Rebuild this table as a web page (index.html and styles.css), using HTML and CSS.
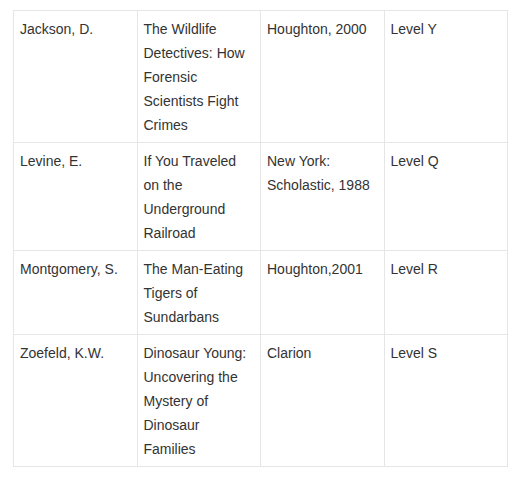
FILE: index.html
```html
<!DOCTYPE html>
<html>
<head>
<meta charset="utf-8">
<link rel="stylesheet" href="styles.css">
</head>
<body>
<table class="books">
  <tr>
    <td>Jackson, D.</td>
    <td>The Wildlife Detectives: How Forensic Scientists Fight Crimes</td>
    <td>Houghton, 2000</td>
    <td>Level Y</td>
  </tr>
  <tr>
    <td>Levine, E.</td>
    <td>If You Traveled on the Underground Railroad</td>
    <td>New York: Scholastic, 1988</td>
    <td>Level Q</td>
  </tr>
  <tr>
    <td>Montgomery, S.</td>
    <td>The Man-Eating Tigers of Sundarbans</td>
    <td>Houghton,2001</td>
    <td>Level R</td>
  </tr>
  <tr>
    <td>Zoefeld, K.W.</td>
    <td>Dinosaur Young: Uncovering the Mystery of Dinosaur Families</td>
    <td>Clarion</td>
    <td>Level S</td>
  </tr>
</table>
</body>
</html>
```
FILE: styles.css
```css
html, body {
  margin: 0;
  padding: 0;
  background: #fff;
}
body {
  padding: 10px 0 0 13px;
  font-family: "Comic Sans MS", "Liberation Sans", Arial, sans-serif;
  font-size: 14px;
  color: #333;
}
.books {
  border-collapse: collapse;
  table-layout: fixed;
  width: 495px;
}
.books td {
  width: 25%;
  border: 1px solid #e6e6e6;
  padding: 6px 5.5px 5px 6px;
  line-height: 24px;
  vertical-align: top;
}
```
